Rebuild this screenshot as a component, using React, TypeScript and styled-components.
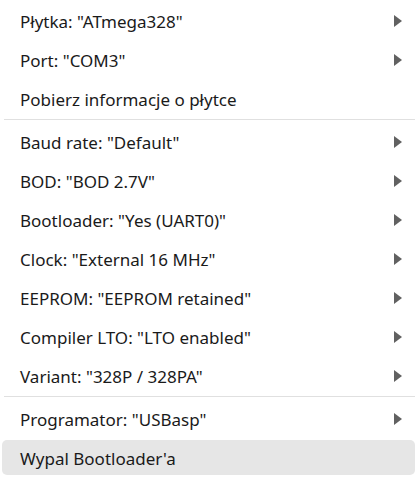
import React from 'react';
import styled, { createGlobalStyle } from 'styled-components';

const GlobalStyle = createGlobalStyle`
  html, body {
    margin: 0;
    padding: 0;
    background: #ffffff;
  }
  body {
    font-family: 'Noto Sans', 'Open Sans', sans-serif;
  }
`;

interface IMenuItem {
  label: string;
  submenu?: boolean;
  active?: boolean;
}

const groups: IMenuItem[][] = [
  [
    { label: 'Płytka: "ATmega328"', submenu: true },
    { label: 'Port: "COM3"', submenu: true },
    { label: 'Pobierz informacje o płytce' },
  ],
  [
    { label: 'Baud rate: "Default"', submenu: true },
    { label: 'BOD: "BOD 2.7V"', submenu: true },
    { label: 'Bootloader: "Yes (UART0)"', submenu: true },
    { label: 'Clock: "External 16 MHz"', submenu: true },
    { label: 'EEPROM: "EEPROM retained"', submenu: true },
    { label: 'Compiler LTO: "LTO enabled"', submenu: true },
    { label: 'Variant: "328P / 328PA"', submenu: true },
  ],
  [
    { label: 'Programator: "USBasp"', submenu: true },
    { label: "Wypal Bootloader'a", active: true },
  ],
];

const Menu = styled.div`
  display: flex;
  flex-direction: column;
  width: 417px;
  height: 477px;
  box-sizing: border-box;
  padding: 1px 2px 0 2px;
  background: #ffffff;
  overflow: hidden;
`;

const Item = styled.div<{ $active?: boolean }>`
  flex: none;
  display: flex;
  align-items: center;
  justify-content: space-between;
  height: 35px;
  margin: 2px 0;
  padding: 0 13px 0 18px;
  border-radius: 5px;
  background: ${(p) => (p.$active ? '#e6e6e6' : 'transparent')};
  color: #1a1a1a;
  font-size: 17px;
  white-space: nowrap;
`;

const Label = styled.span`
  line-height: 22px;
  padding-top: 2px;
`;

const Separator = styled.div`
  flex: none;
  height: 1px;
  margin: 1px 0 2px 2px;
  background: #e0e0e0;
`;

const Arrow = () => (
  <svg width="8" height="12" viewBox="0 0 8 12">
    <path d="M0 0 L8 6 L0 12 Z" fill="#616161" />
  </svg>
);

const App: React.FC = () => (
  <>
    <GlobalStyle />
    <Menu>
      {groups.map((group, gi) => (
        <React.Fragment key={gi}>
          {gi > 0 ? <Separator /> : null}
          {group.map((item) => (
            <Item key={item.label} $active={item.active}>
              <Label>{item.label}</Label>
              {item.submenu ? <Arrow /> : null}
            </Item>
          ))}
        </React.Fragment>
      ))}
    </Menu>
  </>
);

export default App;
